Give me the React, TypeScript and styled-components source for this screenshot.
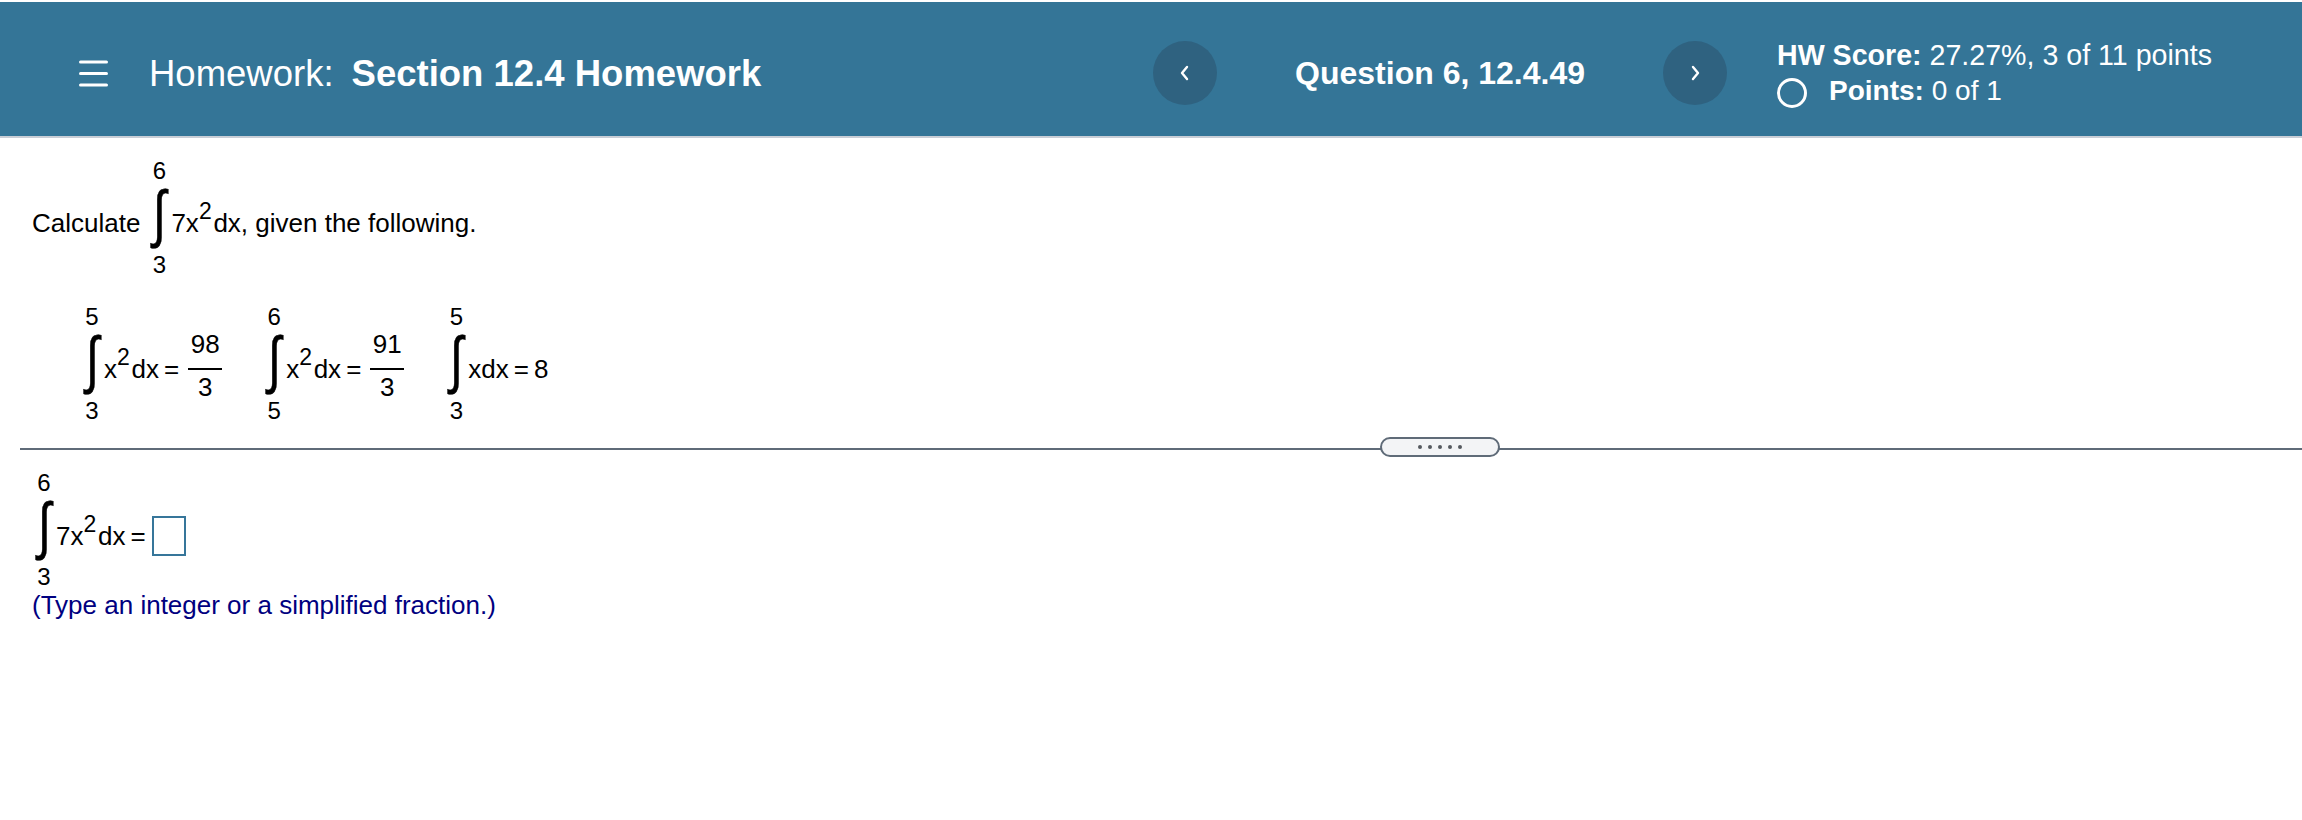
import React from 'react';
import styled, { createGlobalStyle } from 'styled-components';

const GlobalStyle = createGlobalStyle`
  html, body {
    margin: 0;
    padding: 0;
    background: #ffffff;
    color: #000000;
    font-family: "Liberation Sans", Arial, sans-serif;
  }
`;

const Page = styled.div`
  width: 2302px;
  height: 820px;
  overflow: hidden;
  padding-top: 2px;
  box-sizing: border-box;
`;

// ヘッダー
const Header = styled.header`
  display: flex;
  align-items: center;
  height: 136px;
  box-sizing: border-box;
  padding: 8px 0 0 79px;
  background-color: #347597;
  border-bottom: 2px solid #c9ced6;
  color: #ffffff;
`;

const MenuIcon = styled.svg`
  width: 29px;
  height: 27px;
  margin-right: 41px;
  flex-shrink: 0;
`;

const Title = styled.div`
  flex: 1;
  font-size: 36.5px;
  line-height: 42px;
  white-space: nowrap;
  margin-top: 1px;
`;

const Bold = styled.b`
  font-weight: 700;
`;

const TitleName = styled(Bold)`
  margin-left: 18px;
`;

const NavButton = styled.div`
  display: flex;
  align-items: center;
  justify-content: center;
  width: 64px;
  height: 64px;
  border-radius: 50%;
  background-color: #2f6280;
  flex-shrink: 0;
`;

const QuestionLabel = styled.div`
  width: 446px;
  text-align: center;
  font-size: 32px;
  font-weight: 700;
  white-space: nowrap;
`;

const Score = styled.div`
  margin-left: 50px;
  margin-right: 90px;
  font-size: 28.6px;
  line-height: 36px;
  white-space: nowrap;
`;

const PointsLine = styled.div`
  display: flex;
  align-items: center;
  font-size: 28px;
`;

const StatusRing = styled.span`
  display: inline-block;
  width: 30px;
  height: 30px;
  box-sizing: border-box;
  border: 3.5px solid #ffffff;
  border-radius: 50%;
  margin-right: 22px;
  margin-top: 3px;
`;

// 問題エリア
const QuestionArea = styled.section`
  padding: 22px 0 0 32px;
`;

const AnswerArea = styled(QuestionArea)`
  padding-top: 0;
`;

const MathRow = styled.div<{ $indent?: number }>`
  display: flex;
  align-items: center;
  height: 116px;
  padding-left: ${props => props.$indent ?? 0}px;
  font-size: 26px;
  white-space: nowrap;
`;

const GivenRow = styled(MathRow)`
  margin-top: 30px;
`;

const Term = styled.div`
  display: flex;
  align-items: center;
  margin-right: 40px;
`;

const MathText = styled.span`
  line-height: 30px;
  margin-top: 10px;
`;

const Lead = styled(MathText)`
  margin-right: 7px;
`;

const AnswerText = styled(MathText)`
  margin-top: 12px;
`;

const Sup = styled.sup`
  font-size: 23px;
  letter-spacing: 1.7px;
  line-height: 0;
  vertical-align: 13px;
`;

const Eq = styled.span`
  margin: 0 5px;
`;

const IntegralBox = styled.div`
  display: flex;
  flex-direction: column;
  align-items: center;
  width: 24px;
  flex-shrink: 0;
`;

const Limit = styled.span`
  font-size: 24px;
  line-height: 22px;
`;

const IntegralSign = styled.span`
  height: 72px;
  font-family: "Liberation Sans", sans-serif;
  font-size: 60px;
  line-height: 64px;
  -webkit-text-stroke: 0.5px #000000;
  transform: scale(0.8, 1.05);
`;

const Fraction = styled.div`
  display: flex;
  flex-direction: column;
  align-items: stretch;
  width: 34px;
  margin-left: 4px;
  margin-top: 3px;
  text-align: center;
  line-height: 30px;
`;

const FractionBar = styled.div`
  height: 2px;
  margin: 9px 0 2px;
  background-color: #000000;
`;

const Divider = styled.div`
  position: relative;
  height: 2px;
  margin: 26px 0 22px 20px;
  background-color: #5f6b78;
`;

const DragHandle = styled.div`
  position: absolute;
  left: 1360px;
  top: -11px;
  display: flex;
  align-items: center;
  justify-content: center;
  gap: 6px;
  width: 120px;
  height: 20px;
  box-sizing: border-box;
  border: 2px solid #5f6b78;
  border-radius: 10px;
  background-color: #f3f4f6;
`;

const HandleDot = styled.span`
  width: 4px;
  height: 4px;
  border-radius: 50%;
  background-color: #55595f;
`;

const AnswerBox = styled.span`
  display: inline-block;
  width: 34px;
  height: 40px;
  box-sizing: border-box;
  border: 2px solid #36769a;
  background-color: #ffffff;
  margin: 12px 0 0 1px;
`;

const Hint = styled.div`
  font-size: 26px;
  line-height: 30px;
  color: #000080;
  margin-top: 2px;
`;

const Integral: React.FC<{ upper: number; lower: number }> = ({ upper, lower }) => (
  <IntegralBox>
    <Limit>{upper}</Limit>
    <IntegralSign>∫</IntegralSign>
    <Limit>{lower}</Limit>
  </IntegralBox>
);

const Chevron: React.FC<{ points: string }> = ({ points }) => (
  <svg width="12" height="18" viewBox="0 0 12 18">
    <polyline points={points} fill="none" stroke="#ffffff" strokeWidth="2.4" strokeLinecap="round" strokeLinejoin="round" />
  </svg>
);

const given = [
  { upper: 5, lower: 3, numerator: 98 },
  { upper: 6, lower: 5, numerator: 91 },
];

const App: React.FC = () => (
  <Page>
    <GlobalStyle />
    <Header>
      <MenuIcon viewBox="0 0 29 27">
        <g stroke="#ffffff" strokeWidth="3" strokeLinecap="round">
          <line x1="1.5" y1="2" x2="27.5" y2="2" />
          <line x1="1.5" y1="13.5" x2="27.5" y2="13.5" />
          <line x1="1.5" y1="25" x2="27.5" y2="25" />
        </g>
      </MenuIcon>
      <Title>
        Homework:<TitleName>Section 12.4 Homework</TitleName>
      </Title>
      <NavButton>
        <Chevron points="8,3 3,9 8,15" />
      </NavButton>
      <QuestionLabel>Question 6, 12.4.49</QuestionLabel>
      <NavButton>
        <Chevron points="4,3 9,9 4,15" />
      </NavButton>
      <Score>
        <div>
          <Bold>HW Score:</Bold> 27.27%, 3 of 11 points
        </div>
        <PointsLine>
          <StatusRing />
          <span>
            <Bold>Points:</Bold> 0 of 1
          </span>
        </PointsLine>
      </Score>
    </Header>

    <QuestionArea>
      <MathRow>
        <Lead>Calculate</Lead>
        <Integral upper={6} lower={3} />
        <MathText>
          7x<Sup>2</Sup>dx, given the following.
        </MathText>
      </MathRow>

      <GivenRow $indent={48}>
        {given.map(item => (
          <Term key={item.numerator}>
            <Integral upper={item.upper} lower={item.lower} />
            <MathText>
              x<Sup>2</Sup>dx<Eq>=</Eq>
            </MathText>
            <Fraction>
              <span>{item.numerator}</span>
              <FractionBar />
              <span>3</span>
            </Fraction>
          </Term>
        ))}
        <Term>
          <Integral upper={5} lower={3} />
          <MathText>
            xdx<Eq>=</Eq>8
          </MathText>
        </Term>
      </GivenRow>
    </QuestionArea>

    <Divider>
      <DragHandle>
        {[0, 1, 2, 3, 4].map(i => (
          <HandleDot key={i} />
        ))}
      </DragHandle>
    </Divider>

    <AnswerArea>
      <MathRow>
        <Integral upper={6} lower={3} />
        <AnswerText>
          7x<Sup>2</Sup>dx<Eq>=</Eq>
        </AnswerText>
        <AnswerBox />
      </MathRow>
      <Hint>(Type an integer or a simplified fraction.)</Hint>
    </AnswerArea>
  </Page>
);

export default App;
